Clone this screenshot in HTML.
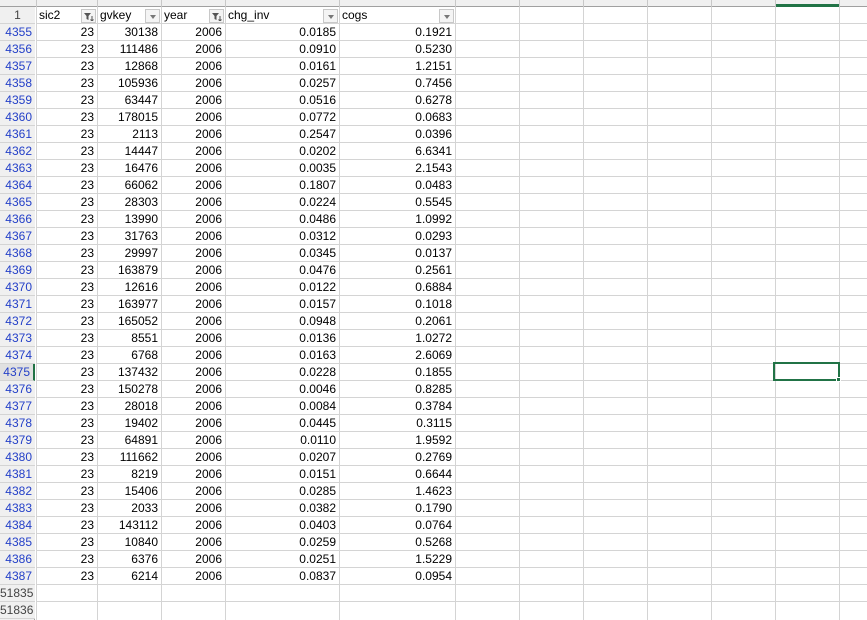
<!DOCTYPE html>
<html><head><meta charset="utf-8"><style>
*{margin:0;padding:0;box-sizing:border-box}
html,body{width:867px;height:620px;overflow:hidden}
body{background:#fff;font-family:"Liberation Sans",Arial,sans-serif;font-size:12px;position:relative}
#hdr{position:absolute;left:0;top:0;width:867px;height:7px;background:#f0f0f0;border-bottom:1px solid #a0a0a0}
.hl{position:absolute;top:0;height:7px;width:1px;background:#c8c8c8}
.vl{position:absolute;top:7px;height:613px;width:1px;background:#d4d4d4}
.gl{position:absolute;left:36px;right:0;height:1px;background:#d4d4d4}
.rh{position:absolute;left:0;width:35px;height:17px;background:#f0f0f0;color:#2440c8;text-align:right;padding-right:3px;line-height:17px;font-size:12px;border-bottom:1px solid #d4d4d4}
.rh.g{color:#444}
.c{position:absolute;height:17px;line-height:17px;text-align:right;padding-right:3px}
.h{position:absolute;top:7px;height:17px;line-height:17px;padding-left:3px}
.btn{position:absolute;top:9px;width:15px;height:14px;background:#f4f4f4;border:1px solid #c8c8c8}
.btn svg{position:absolute;left:2px;top:3px}
</style></head><body>
<div id="hdr"></div>
<div style="position:absolute;left:0;top:7px;width:35px;height:613px;background:#f0f0f0;border-right:1px solid #a0a0a0"></div>
<div style="position:absolute;left:775px;top:4px;width:64px;height:3px;background:#217346"></div>
<div id="grid"></div>
<div id="cells"></div>
<div style="position:absolute;left:773px;top:362px;width:67px;height:19px;border:2px solid #217346"></div>
<div style="position:absolute;left:836px;top:377px;width:5px;height:5px;background:#217346;border:1px solid #fff"></div>
<script>
var cols=[36,97,161,225,339,455,519,583,647,711,775,839];
var g=document.getElementById('grid'),h='';
cols.forEach(function(x){h+='<div class="vl" style="left:'+x+'px"></div><div class="hl" style="left:'+x+'px"></div>';});
for(var i=0;i<35;i++){h+='<div class="gl" style="top:'+(23+i*17)+'px"></div>';}
g.innerHTML=h;
var d=[[30138,.0185,.1921],[111486,.0910,.5230],[12868,.0161,1.2151],[105936,.0257,.7456],[63447,.0516,.6278],[178015,.0772,.0683],[2113,.2547,.0396],[14447,.0202,6.6341],[16476,.0035,2.1543],[66062,.1807,.0483],[28303,.0224,.5545],[13990,.0486,1.0992],[31763,.0312,.0293],[29997,.0345,.0137],[163879,.0476,.2561],[12616,.0122,.6884],[163977,.0157,.1018],[165052,.0948,.2061],[8551,.0136,1.0272],[6768,.0163,2.6069],[137432,.0228,.1855],[150278,.0046,.8285],[28018,.0084,.3784],[19402,.0445,.3115],[64891,.0110,1.9592],[111662,.0207,.2769],[8219,.0151,.6644],[15406,.0285,1.4623],[2033,.0382,.1790],[143112,.0403,.0764],[10840,.0259,.5268],[6376,.0251,1.5229],[6214,.0837,.0954]];
var c='<div class="rh g" style="top:7px;text-align:center;padding:0">1</div>';
var funnel='<svg width="10" height="8"><path d="M0 0h7l-2.5 3v4l-2-1V3z" fill="#555"/><path d="M8 3v5M6.5 6.5L8 8 9.5 6.5" stroke="#555" stroke-width="1" fill="none"/></svg>';
var arrow='<svg width="10" height="8"><path d="M2 2h6l-3 4z" fill="#777"/></svg>';
var hd=[['sic2',36,97,funnel],['gvkey',97,161,arrow],['year',161,225,funnel],['chg_inv',225,339,arrow],['cogs',339,455,arrow]];
hd.forEach(function(a){c+='<div class="h" style="left:'+a[1]+'px">'+a[0]+'</div><div class="btn" style="left:'+(a[2]-16)+'px">'+a[3]+'</div>';});
d.forEach(function(r,i){var t=24+i*17;var n=4355+i;
c+='<div class="rh" style="top:'+t+'px'+(n==4375?';background:#e1e1e1;border-right:2px solid #217346':'')+'">'+n+'</div>';
c+='<div class="c" style="top:'+t+'px;left:36px;width:61px">23</div>';
c+='<div class="c" style="top:'+t+'px;left:97px;width:64px">'+r[0]+'</div>';
c+='<div class="c" style="top:'+t+'px;left:161px;width:64px">2006</div>';
c+='<div class="c" style="top:'+t+'px;left:225px;width:114px">'+r[1].toFixed(4)+'</div>';
c+='<div class="c" style="top:'+t+'px;left:339px;width:116px">'+r[2].toFixed(4)+'</div>';});
c+='<div class="rh g" style="top:585px">51835</div><div class="rh g" style="top:602px">51836</div>';
document.getElementById('cells').innerHTML=c;
</script>
</body></html>
